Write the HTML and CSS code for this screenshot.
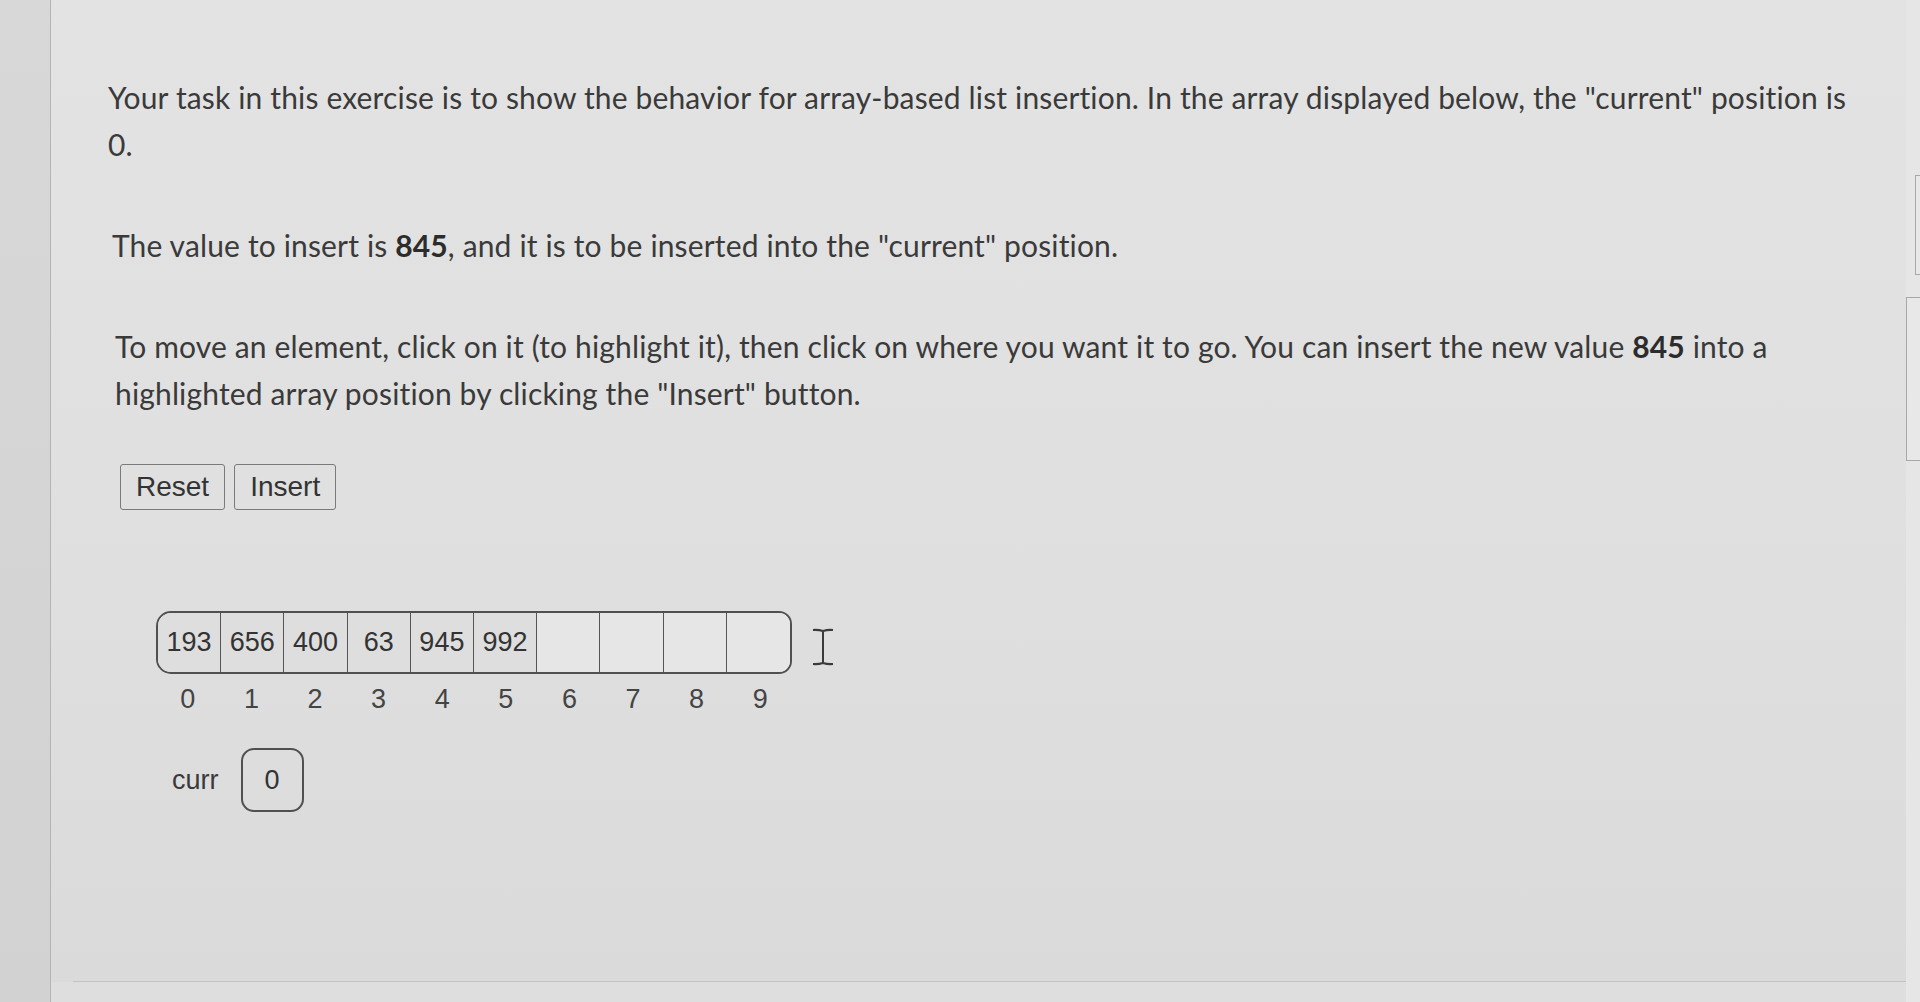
FILE: index.html
```html
<!DOCTYPE html>
<html lang="en">
<head>
<meta charset="utf-8">
<title>Array-based list insertion</title>
<link rel="stylesheet" href="styles.css">
</head>
<body>
<div class="screen">
  <div class="left-strip"></div>
  <main class="main">
    <div class="content">
      <p class="text p1">Your task in this exercise is to show the behavior for array-based list insertion. In the array displayed below, the "current" position is 0.</p>
      <p class="text p2">The value to insert is <b>845</b>, and it is to be inserted into the "current" position.</p>
      <p class="text p3">To move an element, click on it (to highlight it), then click on where you want it to go. You can insert the new value <b>845</b> into a highlighted array position by clicking the "Insert" button.</p>
      <div class="buttons">
        <button class="btn">Reset</button>
        <button class="btn">Insert</button>
      </div>
      <div class="array-row">
        <div class="array">
          <div class="cell filled">193</div>
          <div class="cell filled">656</div>
          <div class="cell filled">400</div>
          <div class="cell filled">63</div>
          <div class="cell filled">945</div>
          <div class="cell filled">992</div>
          <div class="cell"></div>
          <div class="cell"></div>
          <div class="cell"></div>
          <div class="cell"></div>
        </div>
        <svg class="ibeam" width="22" height="38" viewBox="0 0 22 38" aria-hidden="true">
          <path d="M1 2 Q6 1.5 11 3 Q16 1.5 21 2 M11 3 V35 M1 36 Q6 36.5 11 35 Q16 36.5 21 36" fill="none" stroke="#3a3a3a" stroke-width="2"/>
        </svg>
      </div>
      <div class="indices">
        <span>0</span><span>1</span><span>2</span><span>3</span><span>4</span><span>5</span><span>6</span><span>7</span><span>8</span><span>9</span>
      </div>
      <div class="curr-row">
        <span class="curr-label">curr</span>
        <div class="curr-box">0</div>
      </div>
    </div>
    <div class="footer-line"></div>
  </main>
  <aside class="sidebar">
    <div class="side-box top"></div>
    <div class="side-box mid"></div>
  </aside>
</div>
</body>
</html>
```

FILE: styles.css
```css
html, body {
  margin: 0;
  padding: 0;
}

body {
  width: 1920px;
  height: 1002px;
  overflow: hidden;
  background: linear-gradient(100deg, #dcdcdc 0%, #e2e2e2 35%, #e4e4e4 65%, #e2e2e2 100%);
  font-family: "Lato", "Open Sans", sans-serif;
  color: #3a3a3a;
}

.screen {
  display: flex;
  height: 1002px;
}

.left-strip {
  width: 50px;
  flex: none;
  background: linear-gradient(180deg, #d8d8d8 0%, #d2d2d2 100%);
  border-right: 1.5px solid #b4b4b4;
}

.main {
  flex: 1;
  display: flex;
  flex-direction: column;
  background: linear-gradient(180deg, #e3e3e3 0%, #e0e0e0 50%, #dadada 100%);
}

.content {
  height: 982px;
  padding-left: 57px;
  box-sizing: border-box;
  padding-top: 74px;
  border-bottom: 1.5px solid #c2c2c2;
  margin-left: 22px;
}

.content > .text,
.content > .buttons,
.content > .array-row,
.content > .indices,
.content > .curr-row {
  margin-left: -22px;
}

.footer-line {
  flex: 1;
  background: #dedede;
}

.text {
  margin-top: 0;
  margin-bottom: 0;
  font-size: 30px;
  letter-spacing: 0.15px;
  line-height: 47px;
  width: 1762px;
}

.text b {
  font-weight: 700;
  color: #2c2c2c;
}

.content > .p2 {
  margin-top: 54px;
  margin-left: -18px;
}

.content > .p3 {
  margin-top: 54px;
  margin-left: -15px;
  line-height: 46.5px;
}

.buttons {
  display: flex;
  gap: 9px;
  margin-top: 48px;
}

.content > .buttons {
  margin-left: -10px;
}

.btn {
  height: 46px;
  padding: 0 15px;
  font-family: "Liberation Sans", Arial, sans-serif;
  font-size: 28px;
  color: #333333;
  background: #e0e0e0;
  border: 1.5px solid #7a7a7a;
  border-radius: 3px;
}

.array-row {
  display: flex;
  align-items: center;
  margin-top: 101px;
}

.content > .array-row {
  margin-left: 26px;
}

.array {
  display: grid;
  grid-template-columns: repeat(10, 1fr);
  width: 636px;
  height: 63px;
  box-sizing: border-box;
  border: 2px solid #505050;
  border-radius: 15px 13px 13px 15px;
  overflow: hidden;
}

.cell {
  display: flex;
  align-items: center;
  justify-content: center;
  border-right: 1.5px solid #555555;
  font-family: "Liberation Sans", Arial, sans-serif;
  font-size: 27px;
  color: #333333;
  background: #e6e6e6;
}

.cell.filled {
  background: #dedede;
}

.cell:last-child {
  border-right: none;
}

.ibeam {
  margin-left: 20px;
  margin-top: 8px;
}

.indices {
  display: grid;
  grid-template-columns: repeat(10, 1fr);
  width: 636px;
  margin-top: 10px;
  font-family: "Liberation Sans", Arial, sans-serif;
  font-size: 27px;
  line-height: 30px;
  color: #444444;
  text-align: center;
}

.content > .indices {
  margin-left: 26px;
}

.curr-row {
  display: flex;
  align-items: center;
  gap: 22px;
  margin-top: 34px;
}

.content > .curr-row {
  margin-left: 42px;
}

.curr-label {
  font-family: "Liberation Sans", Arial, sans-serif;
  font-size: 27px;
  color: #3a3a3a;
}

.curr-box {
  width: 63px;
  height: 64px;
  box-sizing: border-box;
  border: 2px solid #505050;
  border-radius: 13px;
  display: flex;
  align-items: center;
  justify-content: center;
  font-family: "Liberation Sans", Arial, sans-serif;
  font-size: 27px;
  color: #333333;
}

.sidebar {
  width: 14px;
  flex: none;
  display: flex;
  flex-direction: column;
  align-items: flex-end;
  background: #e6e6e6;
}

.side-box {
  box-sizing: border-box;
  border: 1.5px solid #a8a8a8;
  border-right: none;
  background: #e8e8e8;
}

.side-box.top {
  width: 5px;
  height: 100px;
  margin-top: 175px;
}

.side-box.mid {
  width: 14px;
  height: 164px;
  margin-top: 22px;
}
```
